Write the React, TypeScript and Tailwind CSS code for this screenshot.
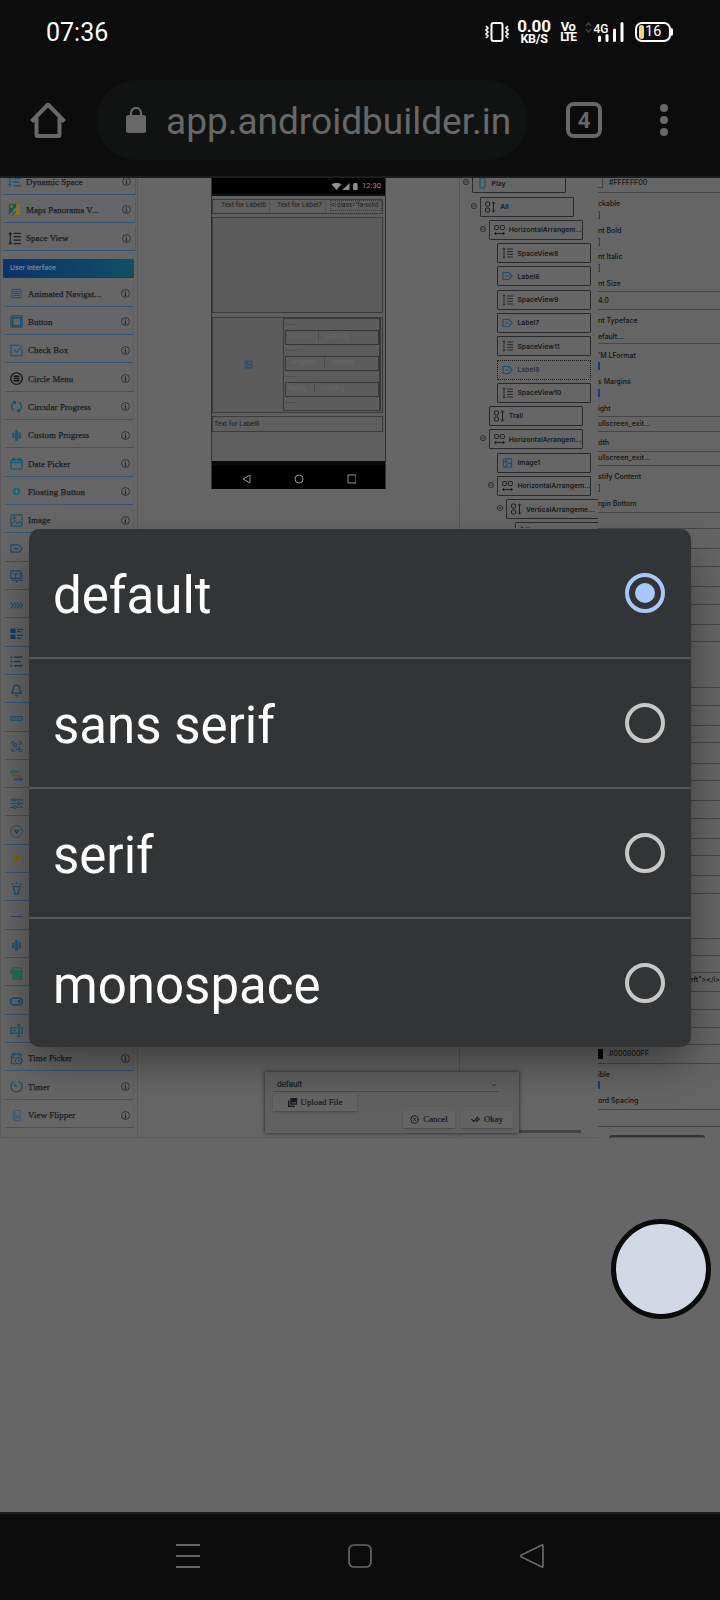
import type { ReactNode } from "react";
import {
  Bell,
  CalendarClock,
  ChevronDown,
  CircleX,
  CheckCheck,
  Image as ImageIcon,
  Lightbulb,
  ScanQrCode,
} from "lucide-react";

const OPTIONS = ["default", "sans serif", "serif", "monospace"];

const I = "size-[13px] shrink-0";

function Glyph({ children, color = "#1b4c69" }: { children: ReactNode; color?: string }) {
  return (
    <svg viewBox="0 0 14 14" className={I} fill="none" stroke={color} strokeWidth="1.2">
      {children}
    </svg>
  );
}

function SpaceGlyph() {
  return (
    <Glyph color="#1e2125">
      <path d="M2.5 1v12M1 2.5 2.5 .8 4 2.5M1 11.5l1.5 1.7L4 11.5M6 1.5h8M6 5h8M6 8.8h8M6 12.5h8" />
    </Glyph>
  );
}

function LabelGlyph() {
  return (
    <Glyph>
      <path d="M1 3h8.500L13 7l-3.500 4H1zM4 7h5" strokeWidth="1.400" />
    </Glyph>
  );
}

function BarsGlyph() {
  return (
    <svg viewBox="0 0 14 14" className={I} fill="#1a5478">
      <rect x="2.400" y="4" width="2.400" height="6" rx=".5" />
      <rect x="5.500" y="1" width="3" height="12" rx=".5" />
      <rect x="9.200" y="3.500" width="2.400" height="7" rx=".5" />
    </svg>
  );
}

const TOP_ITEMS = [
  {
    label: "Dynamic Space",
    icon: (
      <Glyph color="#1c5270">
        <path d="M2 1v12M0 3h4M0 10h4" />
        <path d="M6 3.500h8M5 7.500h7M6 11.500h8" strokeWidth="1.600" />
      </Glyph>
    ),
  },
  {
    label: "Maps Panorama V...",
    icon: (
      <svg viewBox="0 0 14 14" className={I}>
        <path d="M1 1h12v12H1z" fill="#1f5c35" />
        <path d="M9 1h4v12H8z" fill="#8d7416" />
        <path d="M1 13 9.500 3.500 12 4l-8 9z" fill="#6b7075" />
        <path d="M1 8v5l5-5z" fill="#24466f" />
        <path d="M6 13l4-4.500 3 4.500z" fill="#8d7416" />
        <circle cx="3.800" cy="3.800" r="1.500" fill="#6b7075" />
      </svg>
    ),
  },
  { label: "Space View", icon: <SpaceGlyph /> },
];

const ITEMS: { label?: string; icon: ReactNode }[] = [
  {
    label: "Animated Navigat...",
    icon: (
      <Glyph color="#264f80">
        <rect x="2" y="2.500" width="10" height="9" rx="1.500" />
        <path d="M3.500 5h7M3.500 7h7M3.500 9h7" />
      </Glyph>
    ),
  },
  {
    label: "Button",
    icon: (
      <Glyph>
        <rect x="1" y="1" width="12" height="12" rx="1" />
        <rect x="3" y="3" width="8.500" height="8.500" strokeWidth="1.600" />
      </Glyph>
    ),
  },
  {
    label: "Check Box",
    icon: (
      <Glyph color="#1d5670">
        <path d="M13 6v6.500H1v-11h9M4.500 6l2.700 2.800L13 2.500" strokeWidth="1.400" />
      </Glyph>
    ),
  },
  {
    label: "Circle Menu",
    icon: (
      <Glyph color="#101010">
        <circle cx="7" cy="7" r="6.200" strokeWidth="1.300" />
        <path d="M3.800 4.600h6.400M3.800 7h6.400M3.800 9.400h6.400" strokeWidth="1.400" />
      </Glyph>
    ),
  },
  {
    label: "Circular Progress",
    icon: (
      <Glyph color="#1c4e66">
        <path d="M5.500 2A5.200 5.200 0 0 0 4 11.300M8.500 12A5.200 5.200 0 0 0 10 2.700M3.300 1.500 6 2l-1 2.600M10.700 12.500 8 12l1-2.600" strokeWidth="1.500" />
      </Glyph>
    ),
  },
  { label: "Custom Progress", icon: <BarsGlyph /> },
  {
    label: "Date Picker",
    icon: (
      <Glyph color="#1a5673">
        <rect x="1" y="3" width="12" height="10" rx="1" strokeWidth="1.400" />
        <path d="M1 6h12" />
        <circle cx="4" cy="2.800" r="1.500" />
        <circle cx="10" cy="2.800" r="1.500" />
      </Glyph>
    ),
  },
  {
    label: "Floating Button",
    icon: (
      <svg viewBox="0 0 14 14" className={I}>
        <rect x="1" y="1" width="12" height="12" rx="2" fill="#5d6a69" />
        <circle cx="7" cy="7" r="4" fill="#1c6a68" />
        <path d="M7 5v4M5 7h4" stroke="#667777" />
      </svg>
    ),
  },
  {
    label: "Image",
    icon: (
      <Glyph color="#1d5068">
        <rect x="1" y="1" width="12" height="12" rx="1" />
        <path d="m1 12 4-5 3 3.500 2-2L13 11" />
        <circle cx="4.500" cy="4.200" r="1.200" />
      </Glyph>
    ),
  },
  { icon: <LabelGlyph /> },
  {
    icon: (
      <Glyph>
        <path d="M1 1h10v8H1zM11 3h2v8H9l-2 2v-2H3V9M3 4h6M6 4v4" />
      </Glyph>
    ),
  },
  {
    icon: (
      <Glyph>
        <path d="m1 4 2.500 3L1 10M4.300 4l2.500 3-2.500 3M7.600 4l2.500 3-2.500 3M11 4l2.500 3L11 10" />
      </Glyph>
    ),
  },
  {
    icon: (
      <Glyph color="#153f63">
        <path d="M.5 4h5.500M.5 10.500h5.500" strokeWidth="5" />
        <path d="M7.500 2.500H14M7.500 5h4.500M7.500 9H14M7.500 12h4.500" strokeWidth="1.500" />
      </Glyph>
    ),
  },
  {
    icon: (
      <Glyph color="#173f58">
        <path d="M.5 2.500h2M.5 7h2M.5 11.500h2M4.500 2.500h9M4.500 7h7M4.500 11.500h9" strokeWidth="1.700" />
      </Glyph>
    ),
  },
  { icon: <Bell className={I} color="#174a69" strokeWidth={2.4} /> },
  {
    icon: (
      <Glyph color="#2c5369">
        <rect x=".6" y="5" width="12.800" height="4" rx="1" />
        <path d="M3 7h8" strokeDasharray="1.400 .8" />
      </Glyph>
    ),
  },
  { icon: <ScanQrCode className={I} color="#314e70" strokeWidth={2.6} /> },
  {
    icon: (
      <svg viewBox="0 0 14 14" className={I}>
        <path d="M0 1.500h10v3H0z" fill="#386068" />
        <path d="M2 5.500h10v3H2z" fill="#71553e" />
        <path d="M4 9.600h10v3H4z" fill="#3d4c78" />
      </svg>
    ),
  },
  {
    icon: (
      <Glyph color="#1d5068">
        <path d="M0 3h3M6 3h8M0 7h8M11 7h3M0 11h4M7 11h7" strokeWidth="1.300" />
        <circle cx="4.500" cy="3" r="1.400" />
        <circle cx="9.500" cy="7" r="1.400" />
        <circle cx="5.500" cy="11" r="1.400" />
      </Glyph>
    ),
  },
  {
    icon: (
      <Glyph color="#294c5f">
        <circle cx="7" cy="7" r="6.300" strokeWidth=".9" />
        <path d="M4.800 5.600h4.400L7 9z" />
      </Glyph>
    ),
  },
  { icon: <Lightbulb className={I} color="#7c6a24" fill="#7c6414" strokeWidth={1} /> },
  {
    icon: (
      <Glyph>
        <path d="M3.500 5h7v2L9 9v4H5V9L3.500 7zM7 0v2.500M2 1.500l1.500 1.700M12 1.500l-1.500 1.700" />
      </Glyph>
    ),
  },
  {
    icon: (
      <Glyph color="#34416b">
        <path d="M.5 7h13" />
      </Glyph>
    ),
  },
  { icon: <BarsGlyph /> },
  {
    icon: (
      <svg viewBox="0 0 14 14" className={I}>
        <path d="M3 1h9v12H3z" fill="none" stroke="#1f5c48" />
        <path d="M4.500 3.500h9v8h-9z" fill="#1e7352" />
        <path d="M0 3h5v4H0z" fill="#2b6656" />
      </svg>
    ),
  },
  {
    icon: (
      <Glyph>
        <rect x=".7" y="3.500" width="12.600" height="7" rx="3" strokeWidth="1.400" />
        <circle cx="10" cy="7" r="1.100" fill="#1b4c69" />
      </Glyph>
    ),
  },
  {
    icon: (
      <Glyph color="#1d5270">
        <path d="M7.500 10H1V4h6.500M11.500 4H13v6h-1.500M7.500 1h4M9.500 1v12M7.500 13h4M3 7h3" strokeWidth="1.500" />
      </Glyph>
    ),
  },
  { label: "Time Picker", icon: <CalendarClock className={I} color="#1d5068" strokeWidth={2.4} /> },
  {
    label: "Timer",
    icon: (
      <Glyph color="#274a62">
        <path d="M4 1.700A6 6 0 1 0 9 1.200M7 7.500 4 4.500" strokeWidth="1.300" />
      </Glyph>
    ),
  },
  {
    label: "View Flipper",
    icon: (
      <Glyph color="#37536e">
        <path d="M3.500 1.500H11v11H3.500zM5 1.500v11M6.500 7.500h3v2.500h-3z" strokeWidth="1" />
      </Glyph>
    ),
  },
];

function InfoGlyph() {
  return (
    <svg viewBox="0 0 10 10" className="size-[9px] shrink-0" fill="none" stroke="#222" strokeWidth=".8">
      <circle cx="5" cy="5" r="4.400" />
      <path d="M5 4.300v3.200M4 7.500h2M4 4.500h1M5 2.400v1" strokeWidth="1" />
    </svg>
  );
}

function PaletteRow({ label, icon, wide }: { label?: string; icon: ReactNode; wide?: boolean }) {
  return (
    <div className="h-[28.33px] shrink-0">
      <div
        className={
          wide
            ? "ml-[2px] flex h-[25px] w-[133px] items-center rounded-[1px] border-r border-b border-r-[#4a5c72] border-b-[#35506e] pr-[4px] pl-[5px]"
            : "ml-[4px] flex h-[25px] w-[129px] items-center rounded-[1px] border-r border-b border-r-[#59616c] border-b-[#3a536e] pr-[3px] pl-[5px]"
        }
      >
        {icon}
        {label && (
          <>
            <span className="ml-[5px] flex-1 font-['Liberation_Serif'] text-[8.800px] leading-[12px] tracking-[0.100px] whitespace-nowrap text-[#1c1e24] [-webkit-text-stroke:0.250px_#1c1e24]">
              {label}
            </span>
            <InfoGlyph />
          </>
        )}
      </div>
    </div>
  );
}

function Palette() {
  return (
    <aside className="flex h-[960px] w-[138px] shrink-0 flex-col overflow-hidden border-r border-l border-[#5a5a5a]">
      <div className="-mt-[9px] shrink-0 pt-[0.600px]">
        {TOP_ITEMS.map((item) => (
          <PaletteRow key={item.label} {...item} wide />
        ))}
      </div>
      <div className="mt-[4px] mb-[4px] ml-[2px] flex h-[19px] w-[131px] shrink-0 items-center rounded-[1px] border-b border-[#123a63] bg-linear-to-r from-[#0c326a] to-[#124f63] pl-[7px] font-['Inter'] text-[6.700px] font-semibold text-[#7d8894]">
        User Interface
      </div>
      {ITEMS.map((item, i) => (
        <PaletteRow key={i} {...item} />
      ))}
    </aside>
  );
}

function LoadingRow({ left, right }: { left: string; right: string }) {
  return (
    <>
      <div className="mt-[5px] h-[1px] w-[12px] bg-[#4f4f4f]" />
      <div className="mt-[5px] mb-[4.300px] flex h-[15px] w-[94px] gap-[6px] border border-[#363636] pl-[2px] text-[6.500px] leading-[10px] text-[#696969]">
        <span>{left}</span>
        <span className="h-[10px] w-px bg-[#494949]" />
        <span>{right}</span>
      </div>
    </>
  );
}

function PhonePreview() {
  return (
    <div className="ml-[73px] flex h-[310.500px] w-[175px] flex-col border-r border-l border-[#303030] bg-[#5f5f5f] font-['Roboto']">
      <div className="flex h-[18px] shrink-0 items-center justify-end gap-[3px] border-b-2 border-[#101010] bg-black pr-[4px] text-[7.600px] text-[#969696]">
        <svg viewBox="0 0 30 10" className="h-[9px] w-[28px]" fill="#8e8e8e">
          <path d="M0 2.500Q5.500-1 11 2.500L5.500 9zM20 1v8h-8zM24 2h1V1h3v1h1v7h-5z" />
        </svg>
        12:30
      </div>
      <div className="mt-[2.500px] flex h-[15px] w-[171px] shrink-0 border border-[#3b3b3b] text-[6.800px] leading-[11px] text-[#1d1d1d]">
        <span className="ml-[8px] w-[49px] border-r border-[#525252] whitespace-nowrap">Text for Label6</span>
        <span className="ml-[7px] w-[49px] border-r border-[#525252] whitespace-nowrap">Text for Label7</span>
        <span className="ml-[4px] h-[11px] flex-1 border border-dotted border-[#34364e] text-[6.300px] leading-[9px] whitespace-nowrap">
          {'<i class="fa-solid'}
        </span>
      </div>
      <div className="mt-[3.500px] h-[96px] w-[171px] shrink-0 border border-[#3b3b3b] bg-[#5c5c5c]" />
      <div className="mt-[3.500px] flex h-[96px] w-[171px] shrink-0 border border-[#3b3b3b] bg-[#5c5c5c]">
        <div className="flex w-[70px] items-center justify-center">
          <ImageIcon className="size-[9px]" color="#244e6c" strokeWidth={3} />
        </div>
        <div className="h-[93px] w-[98px] overflow-hidden border border-r-2 border-[#3a3a3a] pl-px">
          <LoadingRow left="Director:" right="Loading.." />
          <LoadingRow left="Language:" right="Loading.." />
          <LoadingRow left="Rating:" right="Loading.." />
          <div className="mt-[5px] h-[1px] w-[12px] bg-[#4f4f4f]" />
          <div className="mt-[7px] ml-[4px] h-[2px] w-[36px] bg-[#653f3f]" />
        </div>
      </div>
      <div className="mt-[3.500px] h-[16px] w-[171px] shrink-0 border border-[#3b3b3b] pl-px text-[6.900px] leading-[14px] text-[#1d1d1d]">
        Text for Label6
      </div>
      <div className="mt-auto flex h-[28px] shrink-0 items-center justify-center border-t-[4px] border-[#0a0a0a] bg-black pt-1">
        <svg viewBox="0 0 114 10" className="h-[10px] w-[114px]" fill="none" stroke="#929292">
          <path d="M8 1v8L1 5zM106 1h8v8h-8z" />
          <circle cx="57" cy="5" r="4" />
        </svg>
      </div>
    </div>
  );
}

type Kind = "screen" | "vertical" | "horizontal" | "space" | "label" | "image";

const TREE: { name?: string; kind: Kind; depth: number; open?: boolean; selected?: boolean }[] = [
  { name: "Play", kind: "screen", depth: 0, open: true },
  { name: "All", kind: "vertical", depth: 1, open: true },
  { name: "HorizontalArrangem...", kind: "horizontal", depth: 2, open: true },
  { name: "SpaceView8", kind: "space", depth: 3 },
  { name: "Label6", kind: "label", depth: 3 },
  { name: "SpaceView9", kind: "space", depth: 3 },
  { name: "Label7", kind: "label", depth: 3 },
  { name: "SpaceView11", kind: "space", depth: 3 },
  { name: "Label8", kind: "label", depth: 3, selected: true },
  { name: "SpaceView10", kind: "space", depth: 3 },
  { name: "Trall", kind: "vertical", depth: 2 },
  { name: "HorizontalArrangem...", kind: "horizontal", depth: 2, open: true },
  { name: "Image1", kind: "image", depth: 3 },
  { name: "HorizontalArrangem...", kind: "horizontal", depth: 3, open: true },
  { name: "VerticalArrangeme...", kind: "vertical", depth: 4, open: true },
  { kind: "space", depth: 5 },
];

function TreeIcon({ kind }: { kind: Kind }) {
  const cls = "h-[12px] w-[11px] shrink-0";
  if (kind === "image") return <ImageIcon className={cls} color="#1d4e6b" strokeWidth={2.4} />;
  if (kind === "label")
    return (
      <svg viewBox="0 0 11 12" className={cls} fill="none" stroke="#1d4e72" strokeWidth="1.200">
        <path d="M1 2.500h6L10 6 7 9.500H1zM3 6h4" />
      </svg>
    );
  if (kind === "screen")
    return (
      <svg viewBox="0 0 11 12" className={cls} fill="none" stroke="#1f5a70" strokeWidth="1.300">
        <rect x="3" y="1" width="5" height="10" rx=".8" />
      </svg>
    );
  if (kind === "space")
    return (
      <svg viewBox="0 0 11 12" className={cls} fill="none" stroke="#222" strokeWidth=".9">
        <path d="M2 1v10M.8 2 2 .8 3.200 2M.8 10 2 11.200 3.200 10M5 2h6M5 4.600h6M5 7.300h6M5 10h6" />
      </svg>
    );
  if (kind === "vertical")
    return (
      <svg viewBox="0 0 11 12" className={cls} fill="none" stroke="#1e1e1e">
        <rect x=".6" y="1" width="4" height="4" rx="1" />
        <rect x=".6" y="7" width="4" height="4" rx="1" />
        <path d="M8.500 1v10M7 2.500l1.500-1.700L10 2.500M7 9.500l1.500 1.700L10 9.500" />
      </svg>
    );
  return (
    <svg viewBox="0 0 11 12" className={cls} fill="none" stroke="#1e1e1e">
      <rect x=".6" y="1.500" width="4" height="4" rx="1" />
      <rect x="6.400" y="1.500" width="4" height="4" rx="1" />
      <path d="M.5 9.500h10M2.200 8 .6 9.500 2.200 11M8.800 8l1.600 1.500L8.800 11" />
    </svg>
  );
}

function ComponentTree() {
  return (
    <section className="flex h-[350px] w-full flex-col overflow-hidden">
      <div className="-mt-[4.600px]">
        {TREE.map((node, i) => (
          <div
            key={i}
            className="flex h-[23.270px] items-start"
            style={{ paddingLeft: 2.6 + node.depth * 8.6 }}
          >
            <span className="mt-[6px] mr-[3px] size-[6px] shrink-0">
              {node.open && (
                <svg viewBox="0 0 6 6" className="size-[6px]" fill="none" stroke="#1e1e1e" strokeWidth=".7">
                  <circle cx="3" cy="3" r="2.600" />
                  <path d="M1.500 3h3" />
                </svg>
              )}
            </span>
            <div
              className={
                node.selected
                  ? "flex h-[20px] w-[94px] shrink-0 items-center gap-[4px] border border-dotted border-[#151515] pl-[4px] text-[#30343c]"
                  : "flex h-[20px] w-[94px] shrink-0 items-center gap-[4px] rounded-[1px] border border-[#282a2e] pl-[4px] text-[#17191d]"
              }
            >
              <TreeIcon kind={node.kind} />
              <span className="pt-px font-['Inter'] text-[6.800px] font-semibold whitespace-nowrap">{node.name}</span>
            </div>
          </div>
        ))}
      </div>
    </section>
  );
}

type Prop = { y: number; text?: string; kind?: "line" | "check" | "on" | "swatch" | "value" };

// y is the lower edge of each strip, measured from the top of the page
const PROPS: Prop[] = [
  { y: 189, text: "#FFFFFF00", kind: "value" },
  { y: 193, kind: "line" },
  { y: 210, text: "ckable" },
  { y: 219, kind: "check" },
  { y: 236.5, text: "nt Bold" },
  { y: 245.5, kind: "check" },
  { y: 262.5, text: "nt Italic" },
  { y: 272, kind: "check" },
  { y: 289.5, text: "nt Size" },
  { y: 292, kind: "line" },
  { y: 306.5, text: "4.0" },
  { y: 310, kind: "line" },
  { y: 326.5, text: "nt Typeface" },
  { y: 342.5, text: "efault..." },
  { y: 344, kind: "line" },
  { y: 361.5, text: "'M LFormat" },
  { y: 370, kind: "on" },
  { y: 387.5, text: "s Margins" },
  { y: 397, kind: "on" },
  { y: 414.5, text: "ight" },
  { y: 417, kind: "line" },
  { y: 430, text: "ullscreen_exit..." },
  { y: 432, kind: "line" },
  { y: 448.5, text: "dth" },
  { y: 452, kind: "line" },
  { y: 464, text: "ullscreen_exit..." },
  { y: 466, kind: "line" },
  { y: 482.5, text: "stify Content" },
  { y: 492, kind: "check" },
  { y: 509.5, text: "rgin Bottom" },
  ...[
    513, 529, 549, 567, 587, 605, 625, 642, 688, 706, 726, 743, 764, 781, 801, 819, 839, 856, 876, 894, 939, 956, 973,
  ].map((y): Prop => ({ y, kind: "line" })),
  { y: 986, text: 'eft"></i>' },
  ...[992, 1010, 1028, 1045].map((y): Prop => ({ y, kind: "line" })),
  { y: 1060, text: "#000000FF", kind: "swatch" },
  { y: 1064, kind: "line" },
  { y: 1081, text: "ible" },
  { y: 1089, kind: "on" },
  { y: 1107, text: "ord Spacing" },
  { y: 1110, kind: "line" },
  { y: 1127, kind: "line" },
];

function PropRow({ row, height }: { row: Prop; height: number }) {
  const far = row.text?.startsWith("eft");
  return (
    <div
      className={
        row.kind === "line"
          ? "flex shrink-0 items-end border-b border-[#454545]"
          : "flex shrink-0 items-end overflow-visible"
      }
      style={{ height }}
    >
      {row.kind === "check" && <span className="h-[8px] w-[2px] border-y border-r border-[#3c3c3c]" />}
      {row.kind === "on" && <span className="h-[8px] w-[2px] bg-[#173a80]" />}
      {row.kind === "value" && <span className="mb-px h-[11px] w-[5px] border-r border-b border-[#444]" />}
      {row.kind === "swatch" && <span className="mb-px h-[10px] w-[5px] bg-black" />}
      {row.text && (
        <span
          className={
            far
              ? "ml-auto leading-[12px] whitespace-nowrap"
              : row.kind
                ? "ml-[6px] leading-[12px] whitespace-nowrap"
                : "leading-[12px] whitespace-nowrap"
          }
        >
          {row.text}
        </span>
      )}
    </div>
  );
}

function Properties() {
  return (
    <aside className="flex h-[960px] w-[122px] shrink-0 flex-col overflow-hidden bg-[#656565] font-['Inter'] text-[7px] font-medium text-[#141414]">
      {PROPS.map((row, i) => (
        <PropRow key={i} row={row} height={row.y - (i ? PROPS[i - 1].y : 178)} />
      ))}
      <div className="mt-[8px] ml-[11px] h-[3px] w-[96px] rounded-t-[3px] border-t-2 border-[#353535] bg-[#505050]" />
    </aside>
  );
}

function UploadDialog() {
  const button =
    "flex h-[17px] items-center justify-center gap-[4px] rounded-[1px] bg-[#646464] shadow-[0_1px_2px_rgba(0,0,0,0.25)]";
  return (
    <div className="absolute top-[1072px] left-[265px] flex h-[61px] w-[254px] flex-col bg-[#606060] pt-[7px] pr-[6px] pl-[8px] font-['Liberation_Serif'] text-[8.800px] text-[#17191d] shadow-[0_0_4px_rgba(0,0,0,0.7)] [-webkit-text-stroke:0.200px_#17191d]">
      <div className="flex h-[13px] w-[226px] items-center justify-between border-b border-[#4a4a4a] pr-px pl-[4px] font-['Inter'] text-[7.600px]">
        default
        <ChevronDown className="size-[8px]" color="#353535" strokeWidth={3} />
      </div>
      <div className={`${button} mt-[2px] w-[84px]`}>
        <svg viewBox="0 0 10 10" className="size-[9px]" fill="#17191d">
          <path d="M2.500 0H10v7.500H2.500zM0 2.500h1.500v6h6V10H0z" />
          <path d="m4 6 1.500-2 1 1.200L8 3.500 9 6z" fill="#555" />
        </svg>
        Upload File
      </div>
      <div className="flex justify-end gap-[6px]">
        <div className={`${button} w-[52px]`}>
          <CircleX className="size-[9px]" strokeWidth={2.5} />
          Cancel
        </div>
        <div className={`${button} w-[52px]`}>
          <CheckCheck className="size-[9px]" strokeWidth={3} />
          Okay
        </div>
      </div>
    </div>
  );
}

function StatusBar() {
  return (
    <div className="flex h-[64px] shrink-0 items-center pl-[46px] text-white">
      <span className="w-[439px] pt-px text-[25px] leading-[30px]">07:36</span>
      <svg viewBox="0 0 24 20" className="h-[20px] w-[24px]" fill="none" stroke="#fff" strokeWidth="2">
        <rect x="6.500" y="1" width="11" height="18" rx="2" />
        <path d="m1 4 2 2-2 2 2 2-2 2 2 2-2 2M23 4l-2 2 2 2-2 2 2 2-2 2 2 2" strokeWidth="1.600" />
      </svg>
      <div className="ml-[7px] flex w-[36px] flex-col items-center font-bold">
        <span className="text-[17px] leading-[12px] tracking-[-0.200px]">0.00</span>
        <span className="pt-px text-[12.500px] leading-[12px] tracking-[-0.300px]">KB/S</span>
      </div>
      <div className="ml-[7px] flex w-[18px] flex-col items-center font-bold">
        <span className="text-[13px] leading-[11px] tracking-[-0.500px]">Vo</span>
        <span className="text-[12px] leading-[11px] tracking-[-1.200px]">LTE</span>
      </div>
      <svg viewBox="0 0 40 22" className="ml-[8px] h-[22px] w-[40px]" fill="none" stroke="#fff">
        <path d="m1 5 2.500-3L6 5M1 8l2.500 3L6 8" stroke="#444" strokeWidth="1.500" />
        <text x="8.500" y="11.500" fontSize="13" textLength="15" lengthAdjust="spacingAndGlyphs" fill="#fff" stroke="none" fontFamily="Roboto" fontWeight="500">
          4G
        </text>
        <path d="M14.500 16v3.500M22 14.500v5M29.500 9v10.500M37 2.500v17" strokeWidth="3" strokeLinecap="round" />
      </svg>
      <div className="ml-[10px] flex h-[20px] w-[36px] items-center rounded-[7px] border-2 border-white pl-[2px]">
        <span className="h-[14px] w-[5px] rounded-[3px] bg-[#f3d478]" />
        <span className="ml-px text-[14.500px] leading-[14px]">16</span>
      </div>
      <span className="h-[8px] w-[2px] rounded-r bg-white" />
    </div>
  );
}

function AddressBar() {
  return (
    <div className="flex h-[112px] shrink-0 items-center text-[#686868]">
      <svg viewBox="0 0 36 36" className="ml-[30px] size-[36px]" fill="none" stroke="#686868" strokeWidth="4">
        <path d="M1.500 19.500 18 2.500l16.500 17M6.500 16v16.500q0 1.500 1.500 1.500h20q1.500 0 1.500-1.500V16" strokeLinejoin="round" />
      </svg>
      <div className="ml-[30px] flex h-[80px] w-[432px] items-center rounded-full bg-[#111312] pl-[30px]">
        <svg viewBox="0 0 20 26" className="h-[26px] w-[20px] shrink-0" fill="#686868">
          <rect y="8" width="20" height="18" rx="2.500" />
          <path d="M5 9V6a5 5 0 0 1 10 0v3" fill="none" stroke="#686868" strokeWidth="2.200" />
        </svg>
        <span className="ml-[20px] pt-[3px] text-[37px] leading-[44px] whitespace-nowrap">app.androidbuilder.in</span>
      </div>
      <div className="ml-[38px] flex size-[36px] items-center justify-center rounded-[8px] border-4 border-[#686868] pt-px text-[22px] font-bold">
        4
      </div>
      <div className="ml-[58px] flex flex-col gap-[4px]">
        <span className="size-[8px] rounded-full bg-[#686868]" />
        <span className="size-[8px] rounded-full bg-[#686868]" />
        <span className="size-[8px] rounded-full bg-[#686868]" />
      </div>
    </div>
  );
}

function OptionDialog() {
  return (
    <div className="absolute top-[529px] left-[29px] h-[518px] w-[662px] overflow-hidden rounded-[10px] bg-[#323435]">
      {OPTIONS.map((name, i) => (
        <div
          key={name}
          className="flex h-[130px] items-center justify-between border-b-2 border-[#555758] pr-[26px] pl-[24px] last:h-[128px] last:border-b-0"
        >
          <span className="pt-[5px] text-[51px] leading-[60px] text-white">{name}</span>
          <span
            className={
              i === 0
                ? "flex size-[40px] items-center justify-center rounded-full border-4 border-[#a8c7fa]"
                : "size-[40px] rounded-full border-4 border-[#c7c7c7]"
            }
          >
            {i === 0 && <span className="size-[20px] rounded-full bg-[#a8c7fa]" />}
          </span>
        </div>
      ))}
    </div>
  );
}

export default function App() {
  return (
    <div className="relative flex h-[1600px] w-[720px] flex-col overflow-hidden bg-[#666] font-['Roboto',sans-serif]">
      <header className="flex h-[178px] shrink-0 flex-col border-b-2 border-[#1c1c1c] bg-[#0c0c0c]">
        <StatusBar />
        <AddressBar />
      </header>

      <main className="flex h-[960px] shrink-0 border-b border-[#5e5e5e]">
        <Palette />
        <div className="w-[321px] shrink-0">
          <PhonePreview />
        </div>
        <div className="flex w-[139px] shrink-0 flex-col overflow-hidden border-l border-[#565656]">
          <ComponentTree />
          <div className="mt-auto mb-[4px] h-[3px] w-[121px] bg-[#454545]" />
        </div>
        <Properties />
      </main>

      <UploadDialog />
      <div className="absolute top-[540px] left-[32px] h-[506px] w-[656px] rounded-[10px] shadow-[0_14px_44px_rgba(0,0,0,0.45)]" />
      <OptionDialog />

      <div className="absolute top-[1219px] left-[611px] size-[100px] rounded-full border-[5px] border-[#0a0a0a] bg-[#d2d8e5]" />

      <nav className="mt-auto flex h-[88px] shrink-0 items-center justify-center gap-[148px] border-t-2 border-[#1c1c1c] bg-[#0c0c0c] pb-[2px]">
        <svg viewBox="0 0 24 24" className="size-[24px]" stroke="#686868" strokeWidth="2">
          <path d="M0 1h24M0 12h24M0 23h24" />
        </svg>
        <svg viewBox="0 0 24 24" className="size-[24px]" fill="none" stroke="#686868" strokeWidth="1.700">
          <rect x="1" y="1" width="22" height="22" rx="5" />
        </svg>
        <svg viewBox="0 0 24 24" className="size-[24px]" fill="none" stroke="#686868" strokeWidth="1.700" strokeLinejoin="round">
          <path d="M21.500 1.200q1.500-.8 1.500 1v19.600q0 1.800-1.500 1L1.500 13q-1.300-1 0-2z" />
        </svg>
      </nav>
    </div>
  );
}
